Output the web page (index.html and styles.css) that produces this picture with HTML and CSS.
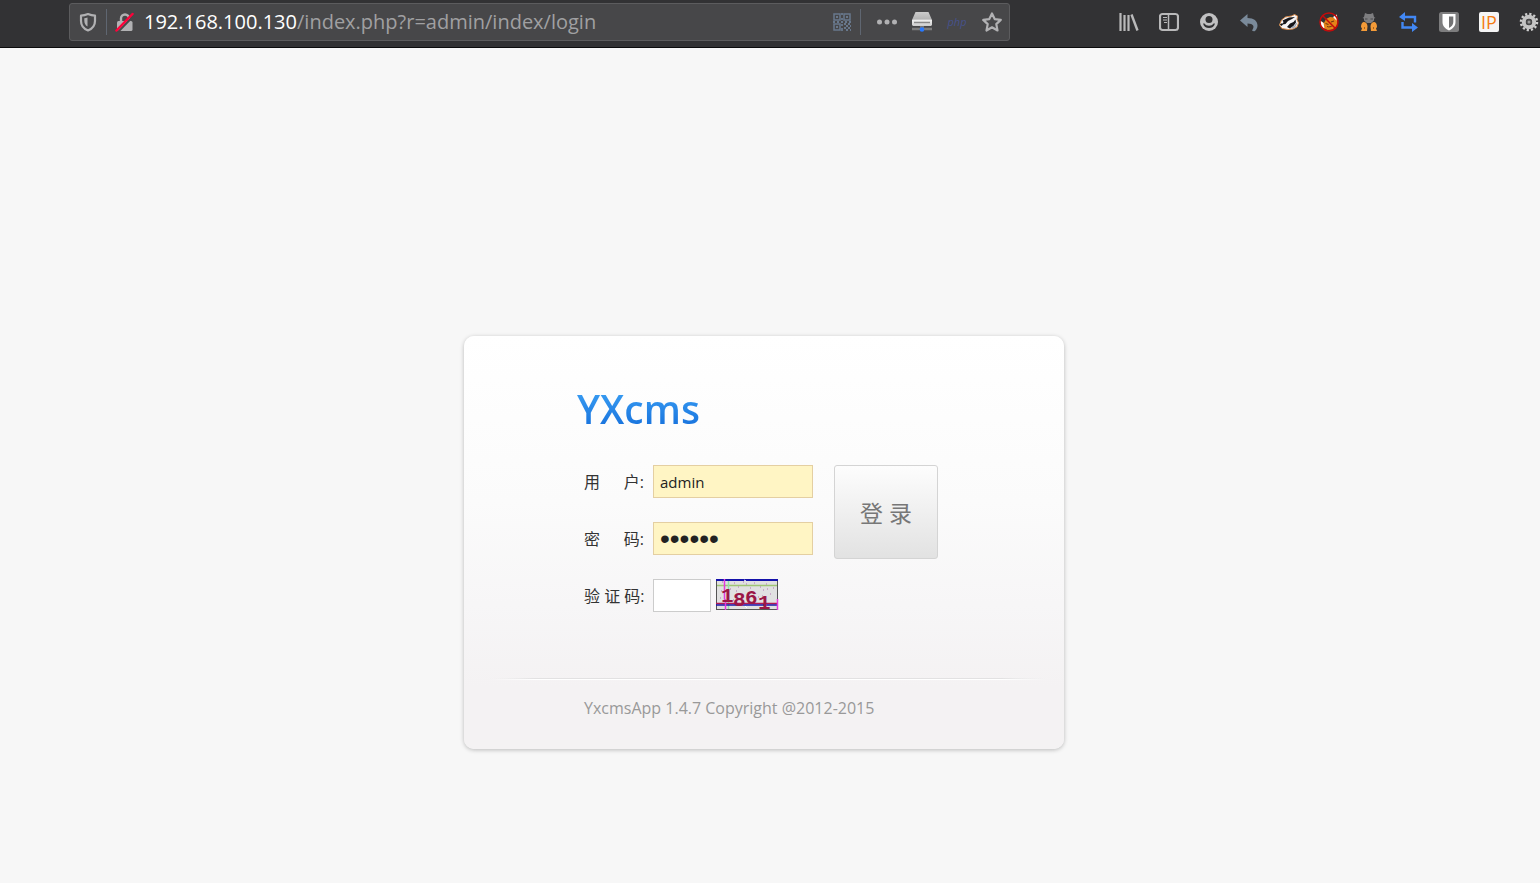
FILE: index.html
```html
<!DOCTYPE html>
<html lang="zh-CN">
<head>
    <meta charset="UTF-8">
    <meta name="viewport" content="width=device-width, initial-scale=1.0">
    <title>YXcms</title>
    <link rel="stylesheet" href="styles.css">
</head>
<body>
    <header class="toolbar">
        <div class="urlbar">
            <button class="icon" type="button" aria-label="Tracking protection">
                <svg viewBox="0 0 20 20"><path d="M10 2c2.500 1 4.700 1.500 7 1.700v5.300c0 4.300-2.500 7.700-7 9.500-4.500-1.800-7-5.200-7-9.500V3.700c2.300-.2 4.500-.7 7-1.700z" fill="none" stroke="#b1b1b3" stroke-width="2.200" stroke-linejoin="round"/><path d="M9.500 5.500v9C7.300 13.300 6.300 11.300 6.300 8.500V6.200c1-.1 2-.3 3.200-.7z" fill="#b1b1b3"/></svg>
            </button>
            <span class="separator"></span>
            <button class="icon" type="button" aria-label="Connection is not secure">
                <svg viewBox="0 0 20 20"><path d="M6 10V6.500a4 4 0 0 1 8 0V10" fill="none" stroke="#b1b1b3" stroke-width="2.400"/><rect x="2" y="9" width="15.500" height="10" rx="1.500" fill="#b1b1b3"/><path d="M3.500 19.500L20 2.500" stroke="#474749" stroke-width="2"/><path d="M1.500 18.500L17.500 2" stroke="#ff0039" stroke-width="2.500" stroke-linecap="round"/></svg>
            </button>
            <div class="url" role="textbox" contenteditable="true" spellcheck="false" aria-label="Address"><span class="host">192.168.100.130</span>/index.php?r=admin/index/login</div>
            <button class="icon" type="button" aria-label="QR code">
                <svg viewBox="0 0 20 20" fill="none" stroke="#68788c" stroke-width="1.500"><path d="M2 2h6v6H2zM12 2h6v6h-6zM2 12h6v6H2z"/><path d="M4 5h2M14 5h2M4 15h2M10 1v2M10 6v2M1 10h2M5 10h2M9 10h2M13 10h2M17 10h2M10 12v2M10 16v3M12 12h2M16 12h2M14 14h2M18 14h1M12 16h2M16 16h2M14 18h2M18 18h1" stroke-width="1.800"/></svg>
            </button>
            <span class="separator"></span>
            <button class="icon more" type="button" aria-label="Page actions">
                <svg viewBox="0 0 20 20" fill="#b1b1b3"><circle cx="2.500" cy="10" r="2.500"/><circle cx="10" cy="10" r="2.500"/><circle cx="17.500" cy="10" r="2.500"/></svg>
            </button>
            <button class="icon" type="button" aria-label="Server">
                <svg viewBox="0 0 20 20">
                    <defs><linearGradient id="disk" x1="0" y1="0" x2="0" y2="1"><stop offset="0" stop-color="#ccc"/><stop offset=".5" stop-color="#b5b5b5"/><stop offset=".6" stop-color="#eee"/><stop offset="1" stop-color="#ccc"/></linearGradient></defs>
                    <path d="M3.500 0h13l3.500 8v5l-1 1H1l-1-1V8z" fill="url(#disk)"/><path d="M2 10.500h16" stroke="#888" stroke-width="1.500"/><path d="M0 17h20" stroke="#7d7d7d" stroke-width="2.500"/><path d="M10 14v4" stroke="#777" stroke-width="4"/><circle cx="10" cy="17.500" r="2.300" fill="#2879ff"/>
                </svg>
            </button>
            <button class="icon php" type="button">php</button>
            <button class="icon" type="button" aria-label="Bookmark this page">
                <svg viewBox="0 0 20 20"><path d="M10 1.500l2.700 5.600 6.100.8-4.500 4.200 1.200 6.400-5.500-3.200-5.500 3.200 1.200-6.400-4.500-4.200 6.100-.8z" fill="none" stroke="#b1b1b3" stroke-width="2.200" stroke-linejoin="round"/></svg>
            </button>
        </div>
        <nav class="extensions" aria-label="Extensions">
            <button class="icon" type="button" aria-label="Library">
                <svg viewBox="0 0 20 20" fill="none" stroke="#b9b9ba" stroke-width="2.200"><path d="M1.500 1v18M5.500 3v16M9.500 3v16"/><path d="M12.500 2.500L18.500 18.500" stroke-width="2.400"/></svg>
            </button>
            <button class="icon" type="button" aria-label="Sidebars">
                <svg viewBox="0 0 20 20" fill="none" stroke="#b9b9ba"><rect x="1" y="2" width="18" height="16" rx="2.500" stroke-width="2.200"/><path d="M9.500 2v16" stroke-width="1.500"/><path d="M4 5.500h4M4 8h4M5 10.500h3" stroke-width="1.200"/></svg>
            </button>
            <button class="icon" type="button" aria-label="Account">
                <svg viewBox="0 0 20 20"><circle cx="10" cy="10" r="9" fill="#c1c1c2"/><circle cx="10" cy="7.500" r="3.500" fill="#323234"/><path d="M4 11.500h1.500c1 1.500 2.500 2.200 4.500 2.200s3.500-.7 4.500-2.200H16c-.8 3.200-3 4.500-6 4.500s-5.200-1.300-6-4.500z" fill="#323234"/></svg>
            </button>
            <button class="icon" type="button" aria-label="Undo">
                <svg viewBox="0 0 20 20"><path d="M1 8.500L8.500 2v4C15 6 18.500 9 18.500 13.500c0 2-.8 3.700-2.500 5.500-1.500.5-2 0-3-.5 3-4 1.500-7-4.500-7V15z" fill="#7a8a9a"/></svg>
            </button>
            <button class="icon" type="button" aria-label="Privacy Badger">
                <svg viewBox="0 0 20 20"><path d="M.5 13l2-5 4-3 6-1 3-1.500 3 1.500-.5 3.500 1.500 3.500-1.500 4-4 2-5 .5-6-1z" fill="#f4f4f6" stroke="#d98c4c"/><path d="M3.500 8.500L10 5.500l6-.5-3 2-4 2-2.500 3-3 .5 1-2.500zM8 15l3-3.500 3.500-1.500 2-2.500.5 3-3 4-3 2z" fill="#16161a"/><path d="M.8 12.500l2.500-1.500.7 1.500-1.500 1.500z" fill="#111"/><path d="M11.500 15.500l4-2 1.500-3 1 1-2 4-3 1z" fill="#a3abb8"/></svg>
            </button>
            <button class="icon" type="button" aria-label="NoScript">
                <svg viewBox="0 0 20 20"><path d="M2 9l3 2 2-4 4-2 4 .5L18 2.500l.5 7-1 5-4 3-5 .5-4-2z" fill="#e48418"/><path d="M1 8.500l3.500 2.500 1 5.500-3.500-2zM14 5l4-2.500-.5 6z" fill="#fff"/><path d="M6.500 11.500l3 1M12 10l3-1" stroke="#713710" stroke-width="1.200"/><path d="M8 14.500c2 .8 4 .4 6-1.200" fill="none" stroke="#713710"/><circle cx="10" cy="10" r="9" fill="none" stroke="#c40b0b" stroke-width="1.500"/><path d="M3.500 3.500l13 13" stroke="#c40b0b" stroke-width="1.500"/></svg>
            </button>
            <button class="icon" type="button" aria-label="User agent">
                <svg viewBox="0 0 20 20"><path d="M5 5l1-4 2.500 1h3L14 1l1 4 1.500 1-1.500.5v2L12 11H8L5 8.500v-2L3.500 6z" fill="#7e7e80"/><path d="M6 7h2.500M11.500 7H14" stroke="#48484a"/><path d="M4.500 10C7 10 8.500 12 8.500 14.500L8 19H2l1-2.500-1-1.500c0-2 .5-4.200 2.500-5zM15.500 10c-2.500 0-4 2-4 4.500l.5 4.500h6l-1-2.500 1-1.500c0-2-.5-4.200-2.500-5z" fill="#f49b38"/><path d="M5.500 15v2M14.500 15v2" stroke="#a8661d"/></svg>
            </button>
            <button class="icon" type="button" aria-label="Proxy">
                <svg viewBox="0 0 20 20" fill="none" stroke="#4288f5" stroke-width="2.400"><path d="M5 5h11v5.500M15 15.500H3.500V10"/><path d="M6 0v9L0 5zM13 11v9l6-4.500z" fill="#4288f5" stroke="none"/></svg>
            </button>
            <button class="icon" type="button" aria-label="Bitwarden">
                <svg viewBox="0 0 20 20"><rect width="20" height="20" rx="2.500" fill="#7d7d7e"/><path d="M3.500 2h13v8c0 4-2.500 6.500-6.500 8.500C6 16.500 3.500 14 3.500 10z" fill="#fff"/><path d="M10 4.500h4.300V10c0 2.700-1.600 4.400-4.300 6z" fill="#737374"/></svg>
            </button>
            <button class="icon ip" type="button">IP</button>
            <button class="icon" type="button" aria-label="Settings">
                <svg viewBox="0 0 20 20"><circle cx="10" cy="10" r="8" fill="none" stroke="#cfcfcf" stroke-width="2.500" stroke-dasharray="2.200 1.990"/><circle cx="10" cy="10" r="5.200" fill="none" stroke="#c4c4c4" stroke-width="4"/><circle cx="10" cy="10" r="3" fill="#4b4b4c"/><circle cx="10" cy="10" r="1.500" fill="#999"/></svg>
            </button>
        </nav>
    </header>

    <main class="page">
        <section class="login-box">
            <h1 class="logo">YXcms</h1>
            <form class="login-form">
                <div class="fields">
                    <label for="username"><span>用</span><span>户:</span></label>
                    <input type="text" id="username" class="filled" value="admin">
                    <label for="password"><span>密</span><span>码:</span></label>
                    <input type="password" id="password" class="filled" value="123456">
                    <label for="checkcode">验 证 码:</label>
                    <div class="code">
                        <input type="text" id="checkcode">
                        <svg class="captcha" viewBox="0 0 62 31" role="img" aria-label="验证码">
                            <rect x=".5" y=".5" width="61" height="30" fill="#e1e1e1" stroke="#555"/>
                            <path d="M0 1h62" stroke="#1411aa" stroke-width="2"/>
                            <path d="M1 6.500h60" stroke="#9fc574" stroke-width="1.500"/>
                            <path d="M12.500 2v28" stroke="#91e2a5" stroke-width="1.500"/>
                            <path d="M0 24.500h61" stroke="#b31854" stroke-width="1.500"/>
                            <path d="M0 26h61" stroke="#1b15a8" stroke-width="1.500"/>
                            <path d="M8.500 0v20l1 1v10M61.500 20v11" stroke="#e43bdd" stroke-width="1.500" fill="none"/>
                            <path d="M5 12h1M14 10h1M18 4h1M22 8h1M27 3h1M30 5h1M34 9h1M38 4h1M44 8h1M47 11h1M51 10h1M54 15h1M42 18h1M4 19h1M17 21h1M50 5h1M57 9h1M20 12h1M6 3h1M46 17h1" stroke="#b273b3" stroke-width="1"/>
                            <path d="M28 1l2 1M29 27l2 2" stroke="#fff"/>
                            <g class="captcha-text"><text x="5" y="23">1</text><text x="17" y="27">8</text><text x="29" y="25">6</text><text x="42" y="30">1</text></g>
                        </svg>
                    </div>
                </div>
                <button class="submit" type="submit">登 录</button>
            </form>
            <hr class="divider">
            <p class="copyright">YxcmsApp 1.4.7 Copyright @2012-2015</p>
        </section>
    </main>
</body>
</html>
```
FILE: styles.css
```css
* { box-sizing: border-box; }
body { margin: 0; background: #f7f7f7; font-family: "Open Sans", "Noto Sans CJK SC", sans-serif; font-size: 15px; color: #333; }
button { border: 0; padding: 0; background: none; font-family: inherit; cursor: pointer; }

/* browser toolbar */
.toolbar { display: flex; align-items: center; height: 48px; padding: 0 1px 3px 69px; background: #323234; border-bottom: 1px solid #0c0c0d; }
.urlbar { display: flex; flex: 1; align-items: center; min-width: 0; height: 38px; margin-right: 109px; padding: 0 7px 0 8px; background: #474749; border: 1px solid #5c5c5e; border-radius: 3px; }
.icon { flex: none; width: 20px; height: 20px; }
.icon svg { display: block; width: 20px; height: 20px; }
.separator { flex: none; width: 1px; height: 26px; margin: 0 8px; background: #5f6671; }
.url { flex: 1; min-width: 0; margin-left: 9px; overflow: hidden; white-space: nowrap; font-size: 20px; line-height: 32px; color: #a0a0a2; outline: none; }
.host { color: #fff; }
.more { margin-left: 8px; }
.urlbar .more ~ .icon { margin-left: 15px; }
.php { color: #46528c; font-size: 11px; font-style: italic; line-height: 20px; }
.extensions { display: flex; gap: 20px; }
.ip { background: #f5f5f5; border-radius: 2px; color: #f47c12; font-size: 18px; line-height: 20px; }

/* login card */
.page { display: flex; justify-content: center; padding: 288px 12px 40px 0; }
.login-box { width: 100%; max-width: 600px; padding: 53px 0 29px; border-radius: 10px; background: linear-gradient(#fff, #fbfbfb 40%, #f7f6f7 65%, #f4f2f3 85%); box-shadow: 0 1px 4px rgba(0, 0, 0, 0.25); }
.logo { width: max-content; margin: 0 0 36px 113px; font-size: 39px; font-weight: 600; line-height: 40px; color: transparent; background: linear-gradient(#3ba0f4, #1670dc); -webkit-background-clip: text; background-clip: text; }
.login-form { display: flex; align-items: flex-start; gap: 21px; margin-left: 120px; }
.fields { display: grid; grid-template-columns: 60px 160px; column-gap: 9px; row-gap: 24px; align-items: center; }
.fields label { display: flex; justify-content: space-between; white-space: pre; font-size: 16px; line-height: 24px; }
.fields input { width: 100%; height: 33px; padding: 0 6px; border: 1px solid #ccc; background: #fff; font-family: inherit; font-size: 15px; color: #222; outline: none; }
.fields .filled { background: #fff5c4; border-color: #e4cfa2; }
.fields input[type="password"] { font-family: "Liberation Sans", sans-serif; font-size: 28px; }
.code { display: flex; gap: 5px; }
.fields .code input { width: 58px; }
.captcha { width: 62px; height: 31px; overflow: visible; }
.captcha-text { font-family: "Liberation Mono", monospace; font-size: 21px; font-weight: bold; fill: #9b1746; }
.submit { width: 104px; height: 94px; border: 1px solid #d4d4d4; border-radius: 3px; background: linear-gradient(#fdfdfd, #e2e2e2); color: #777; font-size: 23px; }
.divider { height: 2px; margin: 66px 18px 16px 26px; border: 0; background: linear-gradient(90deg, transparent, #e2e1e2 8%, #e2e1e2 92%, transparent) top / 100% 1px no-repeat, linear-gradient(90deg, transparent, #fff 8%, #fff 92%, transparent); }
.copyright { margin: 0 0 0 120px; font-size: 16px; line-height: 24px; color: #999; }
```
